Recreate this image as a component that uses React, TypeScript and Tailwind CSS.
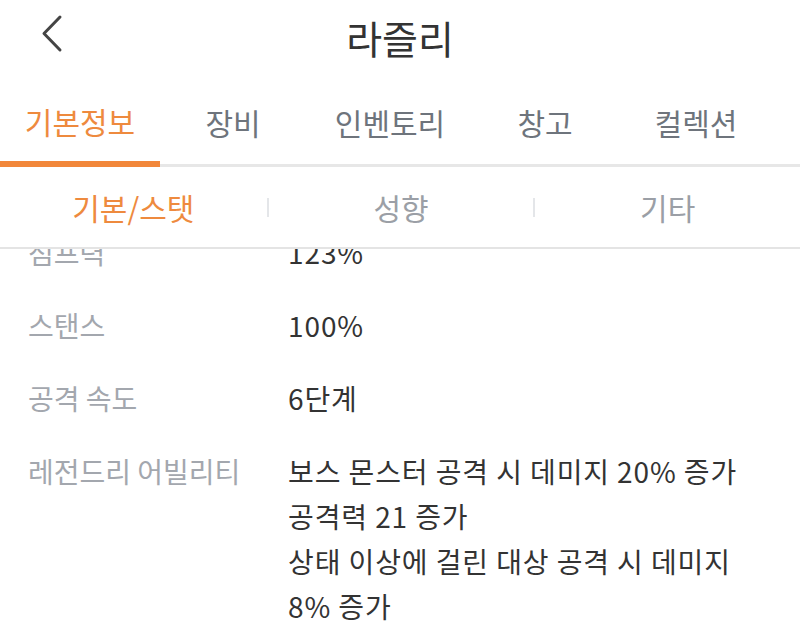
import React from "react";

const tabs = [
  { label: "기본정보", w: "w-[160px]" },
  { label: "장비", w: "w-[146px]" },
  { label: "인벤토리", w: "w-[168px]" },
  { label: "창고", w: "w-[142px]" },
  { label: "컬렉션", w: "w-[160px]" },
];

const subTabs = ["기본/스탯", "성향", "기타"];

const stats: { label: string; lines: string[] }[] = [
  { label: "점프력", lines: ["123%"] },
  { label: "스탠스", lines: ["100%"] },
  { label: "공격 속도", lines: ["6단계"] },
  {
    label: "레전드리 어빌리티",
    lines: [
      "보스 몬스터 공격 시 데미지 20% 증가",
      "공격력 21 증가",
      "상태 이상에 걸린 대상 공격 시 데미지",
      "8% 증가",
    ],
  },
];

export default function App() {
  return (
    <div
      className="flex h-[643px] w-[800px] flex-col overflow-hidden bg-white"
      style={{ fontFamily: '"Noto Sans CJK KR", "Noto Sans", sans-serif' }}
    >
      {/* 상단 헤더 */}
      <header className="relative flex h-[74px] shrink-0 items-center justify-center">
        <button className="absolute left-[36px] top-[10px] flex h-[48px] w-[32px] items-center justify-center">
          <svg width="24" height="40" viewBox="0 0 24 40" fill="none">
            <polyline
              points="20,3 4,19.5 20,36"
              stroke="#444"
              strokeWidth="3"
              strokeLinecap="round"
              strokeLinejoin="round"
            />
          </svg>
        </button>
        <h1 className="text-[39px] leading-none text-[#333]">라즐리</h1>
      </header>

      {/* 메인 탭 */}
      <nav className="flex h-[93px] shrink-0 items-stretch border-b-[3px] border-[#e7e7e7]">
        {tabs.map((t, i) => (
          <div
            key={t.label}
            className={`${t.w} flex items-center justify-center pt-[6px] text-[30px] leading-none ${
              i === 0
                ? "-mb-[3px] border-b-[6px] border-[#f2873a] text-[#ee8a3e]"
                : "text-[#6e747c]"
            }`}
          >
            {t.label}
          </div>
        ))}
      </nav>

      {/* 서브 탭 */}
      <div className="flex h-[82px] shrink-0 items-center border-b-2 border-[#e4e4e4]">
        {subTabs.map((s, i) => (
          <div key={s} className="flex flex-1 items-center">
            {i > 0 && <span className="h-[19px] w-[2px] bg-[#e4e6e9]" />}
            <span
              className={`flex-1 text-center text-[30px] leading-none ${
                i === 0 ? "text-[#ee8a3e]" : "text-[#9b9fa6]"
              }`}
            >
              {s}
            </span>
          </div>
        ))}
      </div>

      {/* 스탯 목록 (스크롤된 상태) */}
      <div className="flex-1 overflow-hidden">
        <div className="-mt-[33px]">
          {stats.map((row) => (
            <div key={row.label} className="flex py-[14px] text-[28px] leading-[45px]">
              <div className="w-[288px] shrink-0 pl-[28px] text-[#a3a7ae]">{row.label}</div>
              <div className="flex-1 pr-[20px] tracking-[0.9px] text-[#333]">
                {row.lines.map((l) => (
                  <div key={l} className="whitespace-nowrap">
                    {l}
                  </div>
                ))}
              </div>
            </div>
          ))}
        </div>
      </div>
    </div>
  );
}
